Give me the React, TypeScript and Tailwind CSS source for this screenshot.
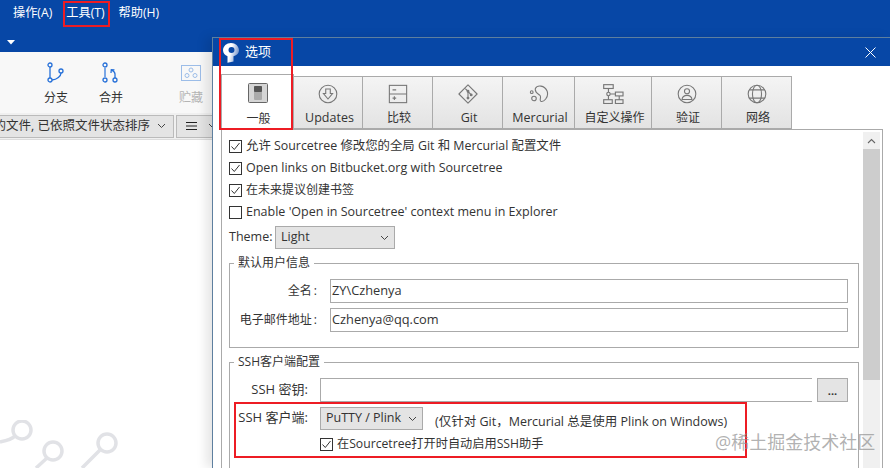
import React from "react";

const font = { fontFamily: '"Open Sans","Noto Sans CJK SC",sans-serif' };

function Check({ checked = true }: { checked?: boolean }) {
  return (
    <span className="w-[13px] h-[13px] border border-[#333] bg-white flex items-center justify-center shrink-0">
      {checked && (
        <svg width="11" height="11" viewBox="0 0 11 11" fill="none" stroke="#333" strokeWidth="1">
          <path d="M1.5 5.5 L4.3 8.5 L9.5 2" />
        </svg>
      )}
    </span>
  );
}

function Chevron({ color = "#444" }: { color?: string }) {
  return (
    <svg width="9" height="6" viewBox="0 0 9 6" fill="none" stroke={color} strokeWidth="1">
      <path d="M1 1 L4.5 4.5 L8 1" />
    </svg>
  );
}

function CheckRow({ label, checked = true, size = "text-[12.5px]" }: { label: string; checked?: boolean; size?: string }) {
  return (
    <div className="h-[22px] flex items-center gap-[4px]">
      <Check checked={checked} />
      <span className={`whitespace-nowrap text-[#333] ${size}`}>{label}</span>
    </div>
  );
}

const tabStroke = { fill: "none", stroke: "#777", strokeWidth: 1.2 };

const tabs = [
  {
    label: "Updates", w: "w-[69px]", size: "text-[12.5px]",
    icon: (
      <svg width="20" height="20" viewBox="0 0 22 22" {...tabStroke}>
        <circle cx="11" cy="11" r="9.7" />
        <path d="M8.5 5.5 H13.5 V10.5 H16 L11 16.5 L6 10.5 H8.5 Z" />
      </svg>
    ),
  },
  {
    label: "比较", w: "w-[70px]", size: "text-[12px]",
    icon: (
      <svg width="20" height="20" viewBox="0 0 22 22" {...tabStroke}>
        <rect x="1.5" y="1.5" width="19" height="19" />
        <path d="M1.5 11 H20.5 M5 6.5 H9 M5 15.5 H9 M7 13.5 V17.5" />
      </svg>
    ),
  },
  {
    label: "Git", w: "w-[70px]", size: "text-[12.5px]",
    icon: (
      <svg width="20" height="20" viewBox="0 0 22 22" {...tabStroke}>
        <path d="M11 1 L21 11 L11 21 L1 11 Z" strokeLinejoin="round" />
        <path d="M8 5 L11 8 V15 M11 8 L14 11.5" />
        <circle cx="11" cy="8" r="1" fill="#777" />
        <circle cx="11" cy="15.5" r="1" fill="#777" />
        <circle cx="14.5" cy="12" r="1" fill="#777" />
      </svg>
    ),
  },
  {
    label: "Mercurial", w: "w-[72px]", size: "text-[12.5px]",
    icon: (
      <svg width="20" height="20" viewBox="0 0 22 22" {...tabStroke}>
        <path d="M7 5 C9 1 17 1 20 8 C22 15 16 20 13 19 C11 18 14 14 12 12.5 C10 11 6 9 7 5 Z" />
        <circle cx="3" cy="9" r="1.5" />
        <circle cx="5.5" cy="16" r="2.5" />
      </svg>
    ),
  },
  {
    label: "自定义操作", w: "w-[77px]", size: "text-[12px]",
    icon: (
      <svg width="21" height="20" viewBox="0 0 22 21" {...tabStroke}>
        <rect x="0.7" y="0.7" width="10" height="4" />
        <circle cx="5.7" cy="10.5" r="1.8" />
        <rect x="13" y="8.5" width="8" height="4" />
        <rect x="0.7" y="16.5" width="9" height="4" />
        <rect x="13" y="16.5" width="8" height="4" />
        <path d="M5.7 4.7 V8.7 M5.7 12.3 V16.5 M7.5 10.5 H13 M17 12.5 V16.5" />
      </svg>
    ),
  },
  {
    label: "验证", w: "w-[70px]", size: "text-[12px]",
    icon: (
      <svg width="20" height="20" viewBox="0 0 22 22" {...tabStroke}>
        <circle cx="11" cy="11" r="9.7" />
        <circle cx="11" cy="8" r="2.8" />
        <path d="M5.5 17 C6 13.5 8.5 12.5 11 12.5 C13.5 12.5 16 13.5 16.5 17 Z" />
      </svg>
    ),
  },
  {
    label: "网络", w: "w-[70px]", size: "text-[12px]",
    icon: (
      <svg width="20" height="20" viewBox="0 0 22 22" {...tabStroke}>
        <circle cx="11" cy="11" r="9.7" />
        <ellipse cx="11" cy="11" rx="5" ry="9.7" />
        <path d="M2.5 6.5 H19.5 M2.5 15.5 H19.5" />
      </svg>
    ),
  },
];

function Group({ title, className, children }: { title: string; className: string; children: React.ReactNode }) {
  return (
    <div className={`relative border border-[#aaa] ${className}`}>
      <span className="absolute left-[4px] top-[-9px] bg-white px-[4px] text-[12px] leading-[16px] text-[#333] whitespace-nowrap">{title}</span>
      {children}
    </div>
  );
}

function Field({ label, value }: { label: string; value: string }) {
  return (
    <div className="flex items-center h-[24px]">
      <span className="w-[87px] text-right text-[12px] text-[#333] whitespace-nowrap">{label}<span className="ml-[2px]">:</span></span>
      <div className="ml-[13px] w-[518px] h-[24px] border border-[#aaa] flex items-center pl-[1px] text-[12.8px] text-[#333]">{value}</div>
    </div>
  );
}

export default function App() {
  return (
    <div className="relative w-[890px] h-[468px] overflow-hidden bg-white flex flex-col" style={font}>
      {/* app header */}
      <div className="h-[52px] bg-[#0747a6] shrink-0 text-white relative">
        <div className="flex h-[26px] items-center pl-[13px] gap-[14px] text-[12.2px]">
          <span>操作(A)</span>
          <span>工具(T)</span>
          <span>帮助(H)</span>
        </div>
        <svg className="absolute left-[7px] top-[40px]" width="8" height="5" viewBox="0 0 8 5"><path d="M0 0 H8 L4 4.5 Z" fill="#fff" /></svg>
      </div>

      {/* app toolbar */}
      <div className="h-[61px] shrink-0 bg-[#f8f8f8] flex text-[12px] text-[#333]">
        <div className="ml-[43px] w-[26px] flex flex-col items-center pt-[10px]">
          <svg width="18" height="21" viewBox="0 0 18 21" fill="none" stroke="#2670d8" strokeWidth="1.3" className="shrink-0">
            <circle cx="3" cy="3" r="2" /><circle cx="3" cy="18" r="2" /><circle cx="14" cy="9" r="2" />
            <path d="M3 5 V16 M14 11 C14 14 10 17.5 5 18" />
          </svg>
          <span className="mt-[6px] whitespace-nowrap">分支</span>
        </div>
        <div className="ml-[29px] w-[26px] flex flex-col items-center pt-[10px]">
          <svg width="18" height="21" viewBox="0 0 18 21" fill="none" stroke="#2670d8" strokeWidth="1.3" className="shrink-0">
            <circle cx="3" cy="3" r="2" /><circle cx="3" cy="18" r="2" /><circle cx="13" cy="18" r="2" />
            <path d="M3 5 V16" stroke="#7ba7e6" strokeWidth="2" />
            <path d="M13 16 V12 C13 10 11.5 9 9.5 8 M9 11 L9.3 7.6 L12.5 7.8" />
          </svg>
          <span className="mt-[6px] whitespace-nowrap">合并</span>
        </div>
        <div className="ml-[54px] w-[26px] flex flex-col items-center pt-[13px] text-[#b4b4b4]">
          <svg width="20" height="16" viewBox="0 0 20 16" fill="none" stroke="#9cbde8" strokeWidth="1" className="shrink-0">
            <rect x="0.5" y="0.5" width="19" height="15" />
            <circle cx="10" cy="5" r="2" /><circle cx="6" cy="10.5" r="2" /><circle cx="14" cy="10.5" r="2" />
          </svg>
          <span className="mt-[8px] whitespace-nowrap">贮藏</span>
        </div>
      </div>

      {/* filter row */}
      <div className="h-[27px] shrink-0 bg-[#f0f0f0] flex items-center text-[12.5px] text-[#333] border-b border-[#ddd]">
        <div className="w-[174px] h-[23px] bg-[#e4e4e4] border border-[#bbb] border-l-0 flex items-center justify-end gap-[7px] pr-[7px] whitespace-nowrap overflow-hidden">
          <span>的文件, 已依照文件状态排序</span>
          <span className="shrink-0"><Chevron /></span>
        </div>
        <div className="ml-[2px] w-[50px] h-[23px] bg-[#e4e4e4] border border-[#bbb] flex items-center pl-[9px] gap-[11px]">
          <svg width="11" height="10" viewBox="0 0 11 10" stroke="#222" strokeWidth="1"><path d="M0 1.5 H11 M0 5 H11 M0 8.5 H11" /></svg>
          <Chevron />
        </div>
      </div>

      {/* empty area with watermark graphic */}
      <div className="flex-1 relative bg-white">
        <svg className="absolute left-0 bottom-0" width="120" height="48" viewBox="0 0 120 48" fill="none" stroke="#e1e2e6" strokeWidth="3.5">
          <circle cx="22" cy="10" r="9" />
          <path d="M15 16 C11 20 5 21 0 22" />
          <circle cx="53" cy="31" r="9" />
          <path d="M47 38 L36 48" />
          <circle cx="107" cy="23" r="9" />
          <path d="M100 30 L82 48" />
        </svg>
      </div>

      {/* options dialog */}
      <div className="absolute left-[212px] top-[37px] w-[678px] h-[431px] bg-white border-l border-t border-[#5d7f9f] shadow-[-6px_0_10px_rgba(0,0,0,0.1)] flex flex-col">
        <div className="h-[28px] bg-[#0747a6] shrink-0 flex items-center text-white text-[13px] pl-[10px] pr-[14px]">
          <svg width="16" height="20" viewBox="0 0 16 20" className="shrink-0 mt-[2px]">
            <defs>
              <linearGradient id="sg" x1="0" y1="0" x2="1" y2="0.3">
                <stop offset="0.55" stopColor="#fff" />
                <stop offset="1" stopColor="#7f9dcf" />
              </linearGradient>
            </defs>
            <path fillRule="evenodd" d="M8 0 C12.4 0 16 3.2 16 7.2 C16 10 14 12.3 10.5 13.3 V18.5 L4.5 19.8 V13.3 C2 12.3 0 10 0 7.2 C0 3.2 3.6 0 8 0 Z M8.5 4 A3 3 0 1 0 8.5 10 A3 3 0 1 0 8.5 4 Z" fill="url(#sg)" />
          </svg>
          <span className="ml-[6px] mb-[1px]">选项</span>
          <svg className="ml-auto" width="11" height="11" viewBox="0 0 11 11" stroke="#fff" strokeWidth="1"><path d="M0.5 0.5 L10.5 10.5 M10.5 0.5 L0.5 10.5" /></svg>
        </div>

        {/* tabs */}
        <div className="flex pl-[8px] pt-[8px] items-end h-[63px] shrink-0 relative z-10 text-[#333]">
          <div className="w-[73px] h-[56px] bg-white border border-b-0 border-[#aaa] flex flex-col items-center mb-[-1px] pt-[8px]">
            <svg width="20" height="20" viewBox="0 0 20 20" className="shrink-0">
              <rect x="0.5" y="0.5" width="19" height="19" rx="1" fill="#d5d5d5" stroke="#666" />
              <rect x="6" y="3" width="8" height="14" rx="1" fill="#aaa" />
              <rect x="6" y="3" width="8" height="6" rx="1" fill="#555" />
            </svg>
            <span className="text-[12px] leading-[17px] mt-[7px] ml-[2px]">一般</span>
          </div>
          {tabs.map((t) => (
            <div key={t.label} className={`${t.w} h-[53px] bg-gradient-to-b from-[#f4f4f4] to-[#e3e3e3] border border-l-0 border-[#aaa] flex flex-col items-center pt-[7px] whitespace-nowrap`}>
              {t.icon}
              <span className={`${t.size} mt-[5px] ml-[3px] leading-[17px]`}>{t.label}</span>
            </div>
          ))}
        </div>

        {/* content */}
        <div className="flex-1 ml-[8px] mr-[7px] border border-[#aaa] border-b-0 flex min-h-0 text-[#333]">
          <div className="flex-1 pl-[7px] pt-[5px] min-w-0 overflow-hidden">
            <CheckRow label="允许 Sourcetree 修改您的全局 Git 和 Mercurial 配置文件" size="text-[12.4px]" />
            <CheckRow label="Open links on Bitbucket.org with Sourcetree" />
            <CheckRow label="在未来提议创建书签" size="text-[12px]" />
            <CheckRow label="Enable 'Open in Sourcetree' context menu in Explorer" checked={false} />
            <div className="flex items-center h-[23px] mt-[3px] text-[12.5px]">
              <span className="w-[46px]">Theme:</span>
              <div className="w-[120px] h-[23px] bg-[#e4e4e4] border border-[#aaa] flex items-center justify-between pl-[5px] pr-[5px]">
                <span>Light</span><Chevron />
              </div>
            </div>
            <Group title="默认用户信息" className="mt-[14px] w-[630px] h-[85px] pt-[15px]">
              <div className="flex flex-col gap-[5px]">
                <Field label="全名" value="ZY\Czhenya" />
                <Field label="电子邮件地址" value="Czhenya@qq.com" />
              </div>
            </Group>
            <Group title="SSH客户端配置" className="mt-[14px] w-[630px] h-[110px] pt-[15px] text-[12.5px]">
              <div className="flex items-center h-[24px]">
                <span className="w-[78px] text-[13px] text-right whitespace-nowrap">SSH 密钥:</span>
                <div className="ml-[12px] w-[492px] h-[24px] border border-[#aaa] border-r-0" />
                <div className="ml-[5px] w-[31px] h-[24px] bg-[#e4e4e4] border border-[#aaa] flex items-center justify-center font-bold text-[11px] leading-none">...</div>
              </div>
              <div className="flex mt-[5px] h-[23px]">
                <span className="w-[78px] text-[13px] pt-[1px] text-right whitespace-nowrap">SSH 客户端:</span>
                <div className="ml-[12px] w-[103px] h-[23px] bg-[#e4e4e4] border border-[#aaa] flex items-center justify-between pl-[5px] pr-[5px]">
                  <span className="whitespace-nowrap">PuTTY / Plink</span><Chevron />
                </div>
                <span className="ml-[12px] pt-[6px] whitespace-nowrap">(仅针对 Git，Mercurial 总是使用 Plink on Windows)</span>
              </div>
              <div className="flex items-center gap-[4px] ml-[90px] mt-[5px] h-[18px]">
                <Check />
                <span className="whitespace-nowrap text-[12.2px]">在Sourcetree打开时自动启用SSH助手</span>
              </div>
            </Group>
          </div>
          {/* scrollbar */}
          <div className="w-[17px] mr-[2px] mt-[2px] bg-[#f0f0f0] flex flex-col shrink-0">
            <div className="h-[17px] flex items-center justify-center shrink-0">
              <svg width="9" height="6" viewBox="0 0 9 6" fill="none" stroke="#666" strokeWidth="1.1"><path d="M1 5 L4.5 1.5 L8 5" /></svg>
            </div>
            <div className="h-[231px] bg-[#cdcdcd]" />
          </div>
        </div>
      </div>

      {/* red annotation boxes */}
      <div className="absolute left-[63px] top-[1px] w-[47px] h-[26px] border-[2px] border-[#ed1c24]" />
      <div className="absolute left-[219px] top-[38px] w-[74px] h-[92px] border-[2px] border-[#ed1c24] z-20" />
      <div className="absolute left-[234px] top-[402px] w-[513px] h-[56px] border-[2px] border-[#ed1c24] z-20" />

      {/* watermark */}
      <div className="absolute left-[715px] top-[431px] text-[18px] leading-[22px] text-[#8f8f8f]/70 z-30 whitespace-nowrap">@稀土掘金技术社区</div>
    </div>
  );
}
